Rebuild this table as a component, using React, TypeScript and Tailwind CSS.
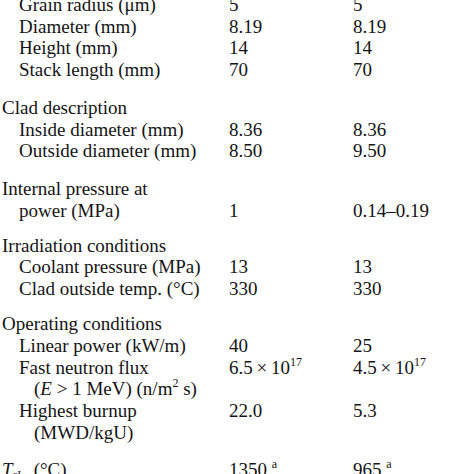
import React from "react";

type Row = {
  label: React.ReactNode;
  indent: 0 | 1 | 2;
  a?: React.ReactNode;
  b?: React.ReactNode;
  mt?: string;
};

const Sup = ({ children }: { children: React.ReactNode }) => (
  <sup className="text-[12px] relative -top-[1px] align-super leading-none">{children}</sup>
);

const rows: Row[] = [
  { label: "Grain radius (μm)", indent: 1, a: "5", b: "5" },
  { label: "Diameter (mm)", indent: 1, a: "8.19", b: "8.19" },
  { label: "Height (mm)", indent: 1, a: "14", b: "14" },
  { label: "Stack length (mm)", indent: 1, a: "70", b: "70" },
  { label: "Clad description", indent: 0, mt: "mt-[16.6px]" },
  { label: "Inside diameter (mm)", indent: 1, a: "8.36", b: "8.36" },
  { label: "Outside diameter (mm)", indent: 1, a: "8.50", b: "9.50" },
  { label: "Internal pressure at", indent: 0, mt: "mt-[16.6px]" },
  { label: "power (MPa)", indent: 1, a: "1", b: "0.14–0.19" },
  { label: "Irradiation conditions", indent: 0, mt: "mt-[13px]" },
  { label: "Coolant pressure (MPa)", indent: 1, a: "13", b: "13" },
  { label: "Clad outside temp. (°C)", indent: 1, a: "330", b: "330" },
  { label: "Operating conditions", indent: 0, mt: "mt-[14px]" },
  { label: "Linear power (kW/m)", indent: 1, a: "40", b: "25" },
  {
    label: "Fast neutron flux",
    indent: 1,
    a: (
      <>
        6.5{"\u2009"}×{"\u2009"}10<Sup>17</Sup>
      </>
    ),
    b: (
      <>
        4.5{"\u2009"}×{"\u2009"}10<Sup>17</Sup>
      </>
    ),
  },
  {
    label: (
      <>
        (<i>E</i> &gt; 1 MeV) (n/m<Sup>2</Sup> s)
      </>
    ),
    indent: 2,
  },
  { label: "Highest burnup", indent: 1, a: "22.0", b: "5.3" },
  { label: "(MWD/kgU)", indent: 2 },
  {
    label: (
      <>
        <i>T</i>
        <sub className="text-[11px] leading-none">cL</sub>
        {"\u00a0\u00a0"}(°C)
      </>
    ),
    indent: 0,
    mt: "mt-[15px]",
    a: (
      <>
        1350 <Sup>a</Sup>
      </>
    ),
    b: (
      <>
        965 <Sup>a</Sup>
      </>
    ),
  },
];

const indentCls = ["pl-[2px]", "pl-[19px]", "pl-[34px]"];

export default function App() {
  return (
    <div
      className="w-[474px] h-[474px] overflow-hidden bg-white text-[#141414] text-[19px] leading-[21.6px]"
      style={{ fontFamily: '"Liberation Serif", "Times New Roman", serif' }}
    >
      <div className="-mt-[6px] flex flex-col">
        {rows.map((r, i) => (
          <div
            key={i}
            className={`grid grid-cols-[229px_124px_1fr] whitespace-nowrap ${r.mt ?? ""}`}
          >
            <div className={indentCls[r.indent]}>{r.label}</div>
            <div>{r.a}</div>
            <div>{r.b}</div>
          </div>
        ))}
      </div>
    </div>
  );
}
